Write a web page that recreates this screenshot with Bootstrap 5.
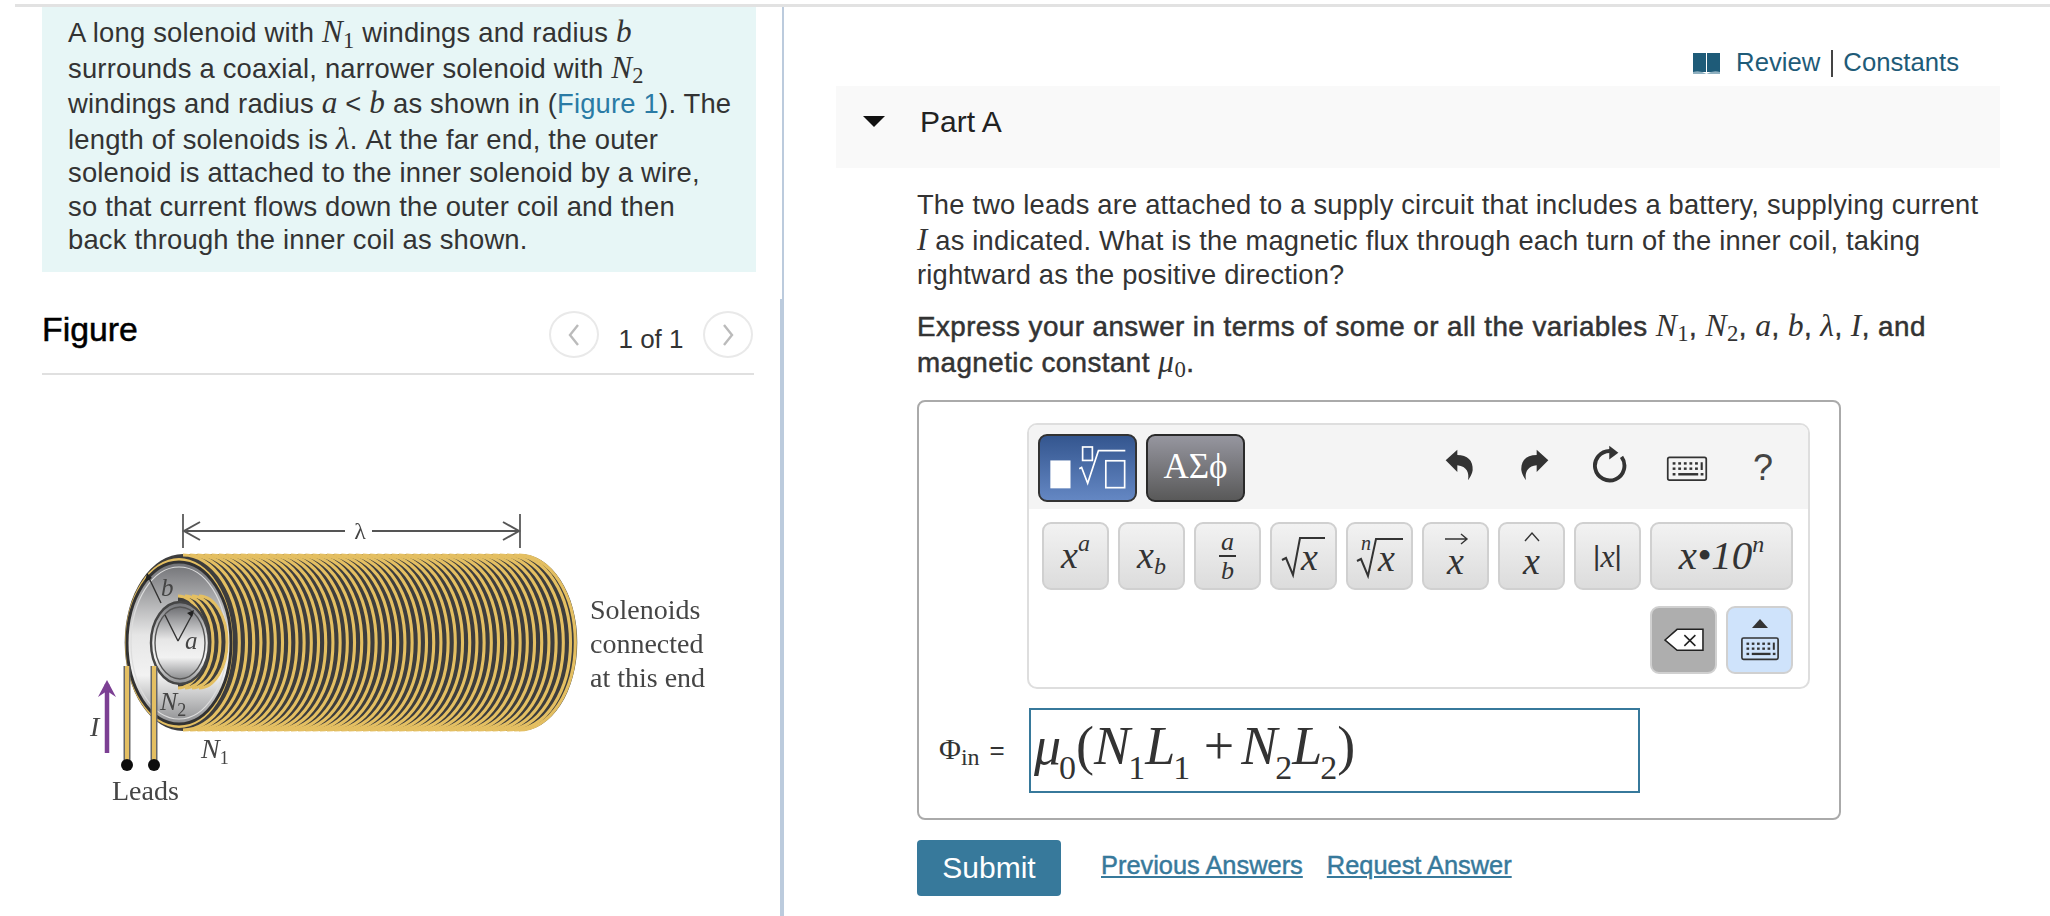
<!DOCTYPE html>
<html lang="en">
<head>
<meta charset="utf-8">
<title>Solenoid problem</title>
<link href="https://cdn.jsdelivr.net/npm/bootstrap@5.3.0/dist/css/bootstrap.min.css" rel="stylesheet">
<style>
html,body{height:916px;overflow:hidden;background:#fff}
body{font-family:"Liberation Sans",Arial,sans-serif;font-size:25px;color:#333}
.sheet{margin-left:15px;margin-top:4px;border-top:3px solid #e2e2e2;height:909px}
.leftcol{width:769px;padding-left:27px;position:relative;flex:none}
.rail{border-right:2px solid #bccbdd;width:769px;height:292px;position:absolute;left:0;top:0}
.rail2{border-right:4px solid #bccbdd;width:769px;height:617px;position:absolute;left:0;top:292px}
.intro{width:714px;height:265px;background:#e7f6f6;padding:7px 26px;line-height:33.2px;font-size:27.4px;letter-spacing:.2px;white-space:nowrap}
.intro p{margin:0}
.intro .m{line-height:35.6px}
.m{font-family:"Liberation Serif",serif;font-style:italic;font-size:1.14em}
.m sub{font-style:normal;font-size:.72em;bottom:-.25em}
.lnk{color:#2a7ba5;text-decoration:none}
.fighead{width:712px;height:103px;border-bottom:2px solid #e0e0e0;padding-top:39px}
.figtitle{font-size:33.8px;color:#000;-webkit-text-stroke:.5px #000;line-height:36px}
.pager{color:#333;font-size:26px;margin-right:1px}
.circ{width:50px;height:47px;border:2px solid #e9e9e9;border-radius:50%}
.pager .cnt{width:104px;text-align:center;padding-top:9px}
.figsvg{display:block}
.rightcol{flex:1 1 auto;min-width:0;position:relative}
.toplinks{height:79px;padding-top:41px;padding-right:91px;color:#1e5b78;line-height:29px;font-size:25.7px}
.toplinks a{color:#1e5b78;text-decoration:none}
.vbar{width:2px;height:27px;background:#444;margin:2px 10px 0 11px}
.partbar{margin-left:52px;width:1164px;height:82px;background:#f9f9f9;padding:21px 0 0 27px;font-size:30px;color:#222;line-height:30px}
.tri{width:0;height:0;border-left:11px solid transparent;border-right:11px solid transparent;border-top:11px solid #111;margin:9px 35px 0 0}
.body-wrap{margin-left:133px;width:1080px}
.qtext{margin:20px 0 0;line-height:34.6px;font-size:27.3px;letter-spacing:.2px}
.qbold{margin:15px 0 0;line-height:35px;font-size:27.8px;letter-spacing:.43px;-webkit-text-stroke:.5px #333;white-space:nowrap}
.qbold .m{-webkit-text-stroke:0}
.ansbox{width:924px;height:420px;margin-top:20px;border:2px solid #aaa;border-radius:8px;padding:21px 0 0 108px}
.tool{width:783px;height:266px;border:2px solid #dedede;border-radius:10px;overflow:hidden}
.tooltop{height:84px;background:#f4f4f4;padding:9px 0 0 9px}
.mode{width:99px;height:68px;border:2px solid #333;border-radius:9px;margin-right:9px}
.mode.one{background:linear-gradient(#34568f,#6487c3)}
.mode.two{background:linear-gradient(#96969f,#595959);color:#fff;font-family:"Liberation Serif",serif;font-size:35px;line-height:62px;text-align:center;border-color:#2a2a2a}
.ticons{margin-left:auto;width:380px;margin-right:7px}
.ticon{width:76px;height:62px}
.ticon.q{font-size:36px;color:#444;line-height:68px;text-align:center}
.keys{padding:13px 13px 0 13px;gap:9px}
.kbtn{width:67px;height:68px;border:2px solid #d0d0d0;border-radius:9px;background:linear-gradient(#f2f2f2,#dcdcdc);font-family:"Liberation Serif",serif;font-style:italic;font-size:38px;color:#333;flex:none}
.kbtn.wide{width:143px;font-size:41px}
.kbtn sup,.kbtn sub{font-size:24px}
.kbtn sup{top:-.7em}
.frac{font-size:26px;line-height:27px;text-align:center}
.frac i{display:block}
.frac i:first-child{border-bottom:2px solid #333;padding:0 2px}
.abs{font-size:32px}
.abs span{font-style:normal;font-family:"Liberation Sans",sans-serif;font-size:28px}
.keys2{padding:16px 15px 0 0;gap:9px;justify-content:flex-end}
.kbtn.del{background:#aeaeae}
.kbtn.kb{background:#cfe3fb}
.ansrow{margin-top:19px;margin-left:-88px}
.lbl{font-family:"Liberation Serif",serif;font-size:30px;width:90px;color:#333;line-height:82px;white-space:nowrap}
.lbl sub{font-size:.8em}
.lbl b{font-family:"Liberation Sans",sans-serif;font-weight:400;font-size:26px;margin-left:10px}
.ansinput{width:611px;height:85px;border:2px solid #37799b;padding-left:3px;font-family:"Liberation Serif",serif;font-style:italic;font-size:54px;line-height:72px;white-space:nowrap;color:#333}
.ansinput sub{font-style:normal;font-size:34px;bottom:-.45em;margin-left:-2px}
.ansinput span{font-style:normal}
.ansinput .pl{margin-right:7px}
.actions{margin-top:20px}
.subm{width:144px;height:56px;background:#37799b;border:0;border-radius:4px;color:#fff;font-size:30px;padding:0;--bs-btn-hover-bg:#37799b}
.alink{color:#37799b;font-size:25.4px;-webkit-text-stroke:.45px #37799b;text-decoration:underline;margin-top:9px;line-height:32px}
</style>
</head>
<body>
<svg width="0" height="0" class="position-absolute">
<defs>
<symbol id="kbd" viewBox="714 90 120 76">
<rect x="719" y="96" width="110" height="65" rx="5" fill="none" stroke="#333" stroke-width="5"/>
<g fill="#333"><rect x="733" y="110" width="8" height="7"/><rect x="749" y="110" width="8" height="7"/><rect x="765" y="110" width="8" height="7"/><rect x="781" y="110" width="8" height="7"/><rect x="797" y="110" width="8" height="7"/>
<rect x="733" y="125" width="8" height="7"/><rect x="749" y="125" width="8" height="7"/><rect x="765" y="125" width="8" height="7"/><rect x="781" y="125" width="8" height="7"/><rect x="797" y="125" width="8" height="7"/><path d="M813 110h6v22h-6z"/>
<rect x="733" y="141" width="8" height="7"/><rect x="749" y="141" width="57" height="7"/><rect x="813" y="141" width="8" height="7"/></g>
</symbol>
</defs>
</svg>
<div class="sheet d-flex">
  <div class="leftcol">
    <div class="rail"></div><div class="rail2"></div>
    <div class="intro"><p>A long solenoid with <span class="m">N<sub>1</sub></span> windings and radius <span class="m">b</span><br>surrounds a coaxial, narrower solenoid with <span class="m">N<sub>2</sub></span><br>windings and radius <span class="m">a</span> &lt; <span class="m">b</span> as shown in (<a class="lnk" href="#">Figure 1</a>). The<br>length of solenoids is <span class="m">λ</span>. At the far end, the outer<br>solenoid is attached to the inner solenoid by a wire,<br>so that current flows down the outer coil and then<br>back through the inner coil as shown.</p></div>
    <div class="fighead d-flex justify-content-between">
      <div class="figtitle">Figure</div>
      <div class="pager d-flex">
        <div class="circ d-flex align-items-center justify-content-center"><svg width="14" height="26" viewBox="0 0 14 26"><path d="M11 3 3 13l8 10" fill="none" stroke="#bbb" stroke-width="2.4"/></svg></div>
        <div class="cnt">1 of 1</div>
        <div class="circ d-flex align-items-center justify-content-center"><svg width="14" height="26" viewBox="0 0 14 26"><path d="M3 3l8 10-8 10" fill="none" stroke="#bbb" stroke-width="2.4"/></svg></div>
      </div>
    </div>
    <svg class="figsvg" width="714" height="430" viewBox="42 377 714 430" font-family="Liberation Serif, serif" fill="#444">
      <defs>
        <filter id="soft" x="0" y="0" width="100%" height="100%"><feGaussianBlur stdDeviation=".6"/></filter>
        <linearGradient id="gray" x1="0" y1="0" x2="0" y2="1"><stop offset="0" stop-color="#6f7074"/><stop offset=".45" stop-color="#e6e6e6"/><stop offset=".7" stop-color="#f2f2f2"/><stop offset="1" stop-color="#8d8e90"/></linearGradient>
        <path id="ta" d="M0 557A56 87 0 0 1 0 732" fill="none" stroke="#e4bf62" stroke-width="3.1"/>
        <path id="tb" d="M0 598A28 46 0 0 1 0 690" fill="none" stroke="#e4bf62" stroke-width="3"/>
      </defs>
      <g filter="url(#soft)">
        <path d="M183 556H520A57 88 0 0 1 520 733H183A58 88 0 0 1 183 556Z" fill="#3d3d3d"/>
        <g>
          <use href="#ta" x="183"/><use href="#ta" x="190.200"/><use href="#ta" x="197.400"/><use href="#ta" x="204.600"/><use href="#ta" x="211.800"/><use href="#ta" x="219"/><use href="#ta" x="226.200"/><use href="#ta" x="233.400"/><use href="#ta" x="240.600"/><use href="#ta" x="247.800"/><use href="#ta" x="255"/><use href="#ta" x="262.200"/><use href="#ta" x="269.400"/><use href="#ta" x="276.600"/><use href="#ta" x="283.800"/><use href="#ta" x="291"/><use href="#ta" x="298.200"/><use href="#ta" x="305.400"/><use href="#ta" x="312.600"/><use href="#ta" x="319.800"/><use href="#ta" x="327"/><use href="#ta" x="334.200"/><use href="#ta" x="341.400"/><use href="#ta" x="348.600"/><use href="#ta" x="355.800"/><use href="#ta" x="363"/><use href="#ta" x="370.200"/><use href="#ta" x="377.400"/><use href="#ta" x="384.600"/><use href="#ta" x="391.800"/><use href="#ta" x="399"/><use href="#ta" x="406.200"/><use href="#ta" x="413.400"/><use href="#ta" x="420.600"/><use href="#ta" x="427.800"/><use href="#ta" x="435"/><use href="#ta" x="442.200"/><use href="#ta" x="449.400"/><use href="#ta" x="456.600"/><use href="#ta" x="463.800"/><use href="#ta" x="471"/><use href="#ta" x="478.200"/><use href="#ta" x="485.400"/><use href="#ta" x="492.600"/><use href="#ta" x="499.800"/><use href="#ta" x="507"/><use href="#ta" x="514.200"/><use href="#ta" x="519"/>
        </g>
        <ellipse cx="179" cy="645" rx="54" ry="85" fill="#e4bf62"/>
        <ellipse cx="179" cy="645" rx="52" ry="81" fill="url(#gray)" stroke="#333" stroke-width="3"/>
        <ellipse cx="179" cy="645" rx="48" ry="76" fill="none" stroke="#ddd" stroke-width="1.2"/>
        <path d="M178 598H200A28 46 0 0 1 200 690H178Z" fill="#3d3d3d"/>
        <use href="#tb" x="178"/><use href="#tb" x="185"/><use href="#tb" x="192"/><use href="#tb" x="199"/>
        <ellipse cx="180" cy="645" rx="29" ry="41" fill="url(#gray)" stroke="#444" stroke-width="2.4"/>
        <ellipse cx="180" cy="645" rx="25" ry="36" fill="url(#gray)" stroke="#555" stroke-width="1.4"/>
        <path d="M148 578 161 605M178 643 165 617M178 643 193 615" stroke="#333" stroke-width="1.4" fill="none"/>
        <path d="M147 575l-2 9 7-4zM194 612l-7 3 5 4z" fill="#222"/>
        <text x="161" y="598" font-size="25" font-style="italic">b</text>
        <text x="185" y="651" font-size="25" font-style="italic">a</text>
        <text x="160" y="712" font-size="26" font-style="italic">N<tspan dy="6" font-size="18" font-style="normal">2</tspan></text>
        <path d="M127 668V767" stroke="#666" stroke-width="7"/><path d="M127 668V767" stroke="#e4bf62" stroke-width="4"/>
        <path d="M154 668V767" stroke="#666" stroke-width="7"/><path d="M154 668V767" stroke="#e4bf62" stroke-width="4"/>
        <circle cx="127" cy="767" r="6" fill="#111"/><circle cx="154" cy="767" r="6" fill="#111"/>
        <path d="M107 686V755" stroke="#7b3f93" stroke-width="4.500"/><path d="M98 699 107 682l9 17-9-6z" fill="#7b3f93"/>
        <path d="M183 516V550M520 516V550" stroke="#444" stroke-width="1.6"/>
        <path d="M184 533H345M372 533H519M200 524 184 533l16 9M503 524 519 533l-16 9" stroke="#555" stroke-width="2" fill="none"/>
        <text x="360" y="541" font-size="24" text-anchor="middle">λ</text>
        <text x="90" y="738" font-size="28" font-style="italic">I</text>
        <text x="201" y="760" font-size="28" font-style="italic">N<tspan dy="6" font-size="18" font-style="normal">1</tspan></text>
        <text x="112" y="802" font-size="28">Leads</text>
        <text x="590" y="621" font-size="28">Solenoids</text>
        <text x="590" y="655" font-size="28">connected</text>
        <text x="590" y="689" font-size="28">at this end</text>
      </g>
    </svg>
  </div>
  <div class="rightcol">
    <div class="toplinks d-flex justify-content-end">
      <svg class="me-3 mt-1" width="27" height="22" viewBox="0 0 27 22"><path d="M0 1h13v19H0zM14 1H27v19H14z" fill="#1e5b78"/><path d="M0 20q7-2 13.500 2 6.500-4 13.500-2v2H0z" fill="#8fb0c0"/></svg>
      <a href="#">Review</a><div class="vbar"></div><a href="#">Constants</a>
    </div>
    <div class="partbar d-flex"><div class="tri"></div><div>Part A</div></div>
    <div class="body-wrap">
      <p class="qtext">The two leads are attached to a supply circuit that includes a battery, supplying current<br><span class="m">I</span> as indicated. What is the magnetic flux through each turn of the inner coil, taking<br>rightward as the positive direction?</p>
      <p class="qbold">Express your answer in terms of some or all the variables <span class="m">N<sub>1</sub></span>, <span class="m">N<sub>2</sub></span>, <span class="m">a</span>, <span class="m">b</span>, <span class="m">λ</span>, <span class="m">I</span>, and<br>magnetic constant <span class="m">μ<sub>0</sub></span>.</p>
      <div class="ansbox">
        <div class="tool">
          <div class="tooltop d-flex">
            <div class="mode one d-flex align-items-center justify-content-center">
              <svg width="78" height="46" viewBox="68 52 232 135"><rect x="72" y="97" width="60" height="83" fill="#fff"/><g fill="none" stroke="#fff" stroke-width="5"><rect x="168" y="57" width="29" height="40"/><rect x="237" y="98" width="56" height="80"/><path d="M158 122l7-4 18 47 32-97h80"/></g></svg>
            </div>
            <div class="mode two">ΑΣϕ</div>
            <div class="ticons d-flex">
              <div class="ticon d-flex align-items-center justify-content-center"><svg width="30" height="35" viewBox="40 60 90 105"><path d="M45 100 80 68V84C110 84 128 100 126 130 125 140 118 152 112 160 116 140 110 118 80 115V135Z" fill="#333"/></svg></div>
              <div class="ticon d-flex align-items-center justify-content-center"><svg width="30" height="35" viewBox="273 60 90 105"><path transform="matrix(-1 0 0 1 403 0)" d="M45 100 80 68V84C110 84 128 100 126 130 125 140 118 152 112 160 116 140 110 118 80 115V135Z" fill="#333"/></svg></div>
              <div class="ticon d-flex align-items-center justify-content-center"><svg width="38" height="40" viewBox="494 58 108 114"><path d="M578 92A42 42 0 1 1 545 75" fill="none" stroke="#333" stroke-width="11"/><path d="M543 60 569 80 543 99Z" fill="#333"/></svg></div>
              <div class="ticon d-flex align-items-center justify-content-center pt-2"><svg width="42" height="27"><use href="#kbd"/></svg></div>
              <div class="ticon q">?</div>
            </div>
          </div>
          <div class="keys d-flex">
            <div class="kbtn d-flex align-items-center justify-content-center"><span>x<sup>a</sup></span></div>
            <div class="kbtn d-flex align-items-center justify-content-center"><span>x<sub>b</sub></span></div>
            <div class="kbtn d-flex align-items-center justify-content-center"><div class="frac"><i>a</i><i>b</i></div></div>
            <div class="kbtn d-flex align-items-center justify-content-center"><svg width="48" height="48" viewBox="0 0 48 48"><path d="M2 28l4-2 7 17L20 6h25" fill="none" stroke="#333" stroke-width="2"/><text x="21" y="38" font-size="38" font-family="Liberation Serif, serif" font-style="italic" fill="#333">x</text></svg></div>
            <div class="kbtn d-flex align-items-center justify-content-center"><svg width="50" height="50" viewBox="0 0 50 50"><path d="M2 30l4-2 7 17L21 8h27" fill="none" stroke="#333" stroke-width="2"/><text x="23" y="40" font-size="38" font-family="Liberation Serif, serif" font-style="italic" fill="#333">x</text><text x="6" y="19" font-size="20" font-family="Liberation Serif, serif" font-style="italic" fill="#333">n</text></svg></div>
            <div class="kbtn d-flex align-items-center justify-content-center"><svg width="30" height="50" viewBox="0 0 30 50"><path d="M4 8H26M20 3l6 5-6 5" fill="none" stroke="#333" stroke-width="1.400"/><text x="6" y="43" font-size="38" font-family="Liberation Serif, serif" font-style="italic" fill="#333">x</text></svg></div>
            <div class="kbtn d-flex align-items-center justify-content-center"><svg width="30" height="50" viewBox="0 0 30 50"><path d="M8 10l7-8 7 8" fill="none" stroke="#333" stroke-width="1.400"/><text x="6" y="43" font-size="38" font-family="Liberation Serif, serif" font-style="italic" fill="#333">x</text></svg></div>
            <div class="kbtn abs d-flex align-items-center justify-content-center"><span>|</span>x<span>|</span></div>
            <div class="kbtn wide d-flex align-items-center justify-content-center"><span>x•10<sup>n</sup></span></div>
          </div>
          <div class="keys2 d-flex">
            <div class="kbtn del d-flex align-items-center justify-content-center"><svg width="40" height="24" viewBox="72 84 116 68"><path d="M75 118 110 87H185V148H110Z" fill="#fff" stroke="#222" stroke-width="4.500"/><path d="M131 104 163 135M163 104 131 135" stroke="#222" stroke-width="4.500"/></svg></div>
            <div class="kbtn kb d-flex flex-column align-items-center justify-content-center"><svg width="16" height="9" class="mb-2" viewBox="0 0 16 9"><path d="M8 0 16 9H0Z" fill="#333"/></svg><svg width="40" height="25"><use href="#kbd"/></svg></div>
          </div>
        </div>
        <div class="ansrow d-flex">
          <div class="lbl">Φ<sub>in</sub><b>=</b></div>
          <div class="ansinput">μ<sub>0</sub><span>(</span>N<sub>1</sub>L<sub>1</sub> <span class="pl">+</span>N<sub>2</sub>L<sub>2</sub><span>)</span></div>
        </div>
      </div>
      <div class="actions d-flex">
        <button class="btn subm" type="button">Submit</button>
        <a class="alink ms-4 ps-3" href="#">Previous Answers</a>
        <a class="alink ms-4" href="#">Request Answer</a>
      </div>
    </div>
  </div>
</div>
</body>
</html>
